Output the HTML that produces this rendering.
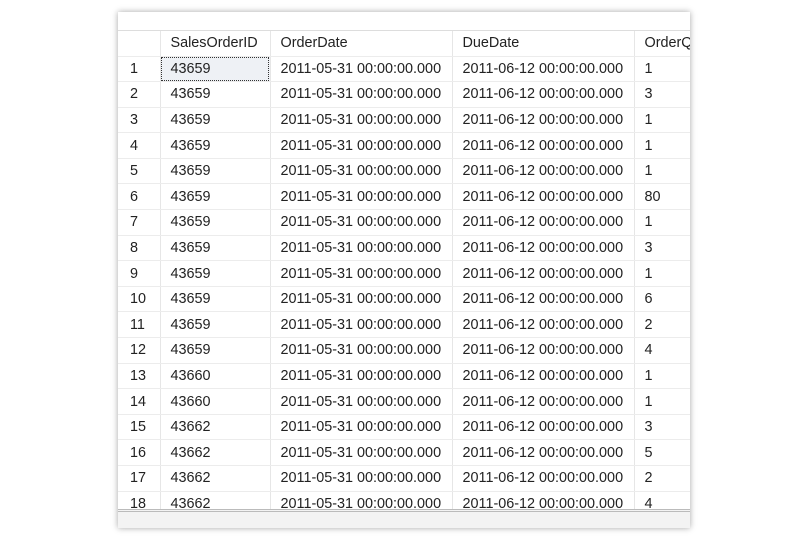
<html><head><style>
body{margin:0;background:#fff;width:800px;height:546px;overflow:hidden;font-family:"Liberation Sans",sans-serif;}
.p{position:absolute;left:118px;top:12px;width:572px;height:516px;background:#fff;box-shadow:0 0 6px rgba(0,0,0,.35);overflow:hidden}
.g{position:absolute;left:0;top:18px;width:572px;height:479px;overflow:hidden;border-top:1px solid #ddd}
table{border-collapse:collapse;font-size:14.4px;color:#222;table-layout:fixed;width:596px}
td{height:25.6px;padding:0 0 0 10px;border-right:1px solid #e6e6e6;border-bottom:1px solid #ececec;white-space:nowrap;overflow:hidden;box-sizing:border-box}
tr:first-child td{height:25px}
td:first-child{padding-left:12px}
.b{position:absolute;left:0;top:497px;width:572px;height:19px;background:#f3f3f3;border-top:3px double #bbb}
.sel{outline:1px dotted #333;outline-offset:-2px;background:#eef1f5}
</style></head><body>
<div class="p"><div class="g"><table>
<colgroup><col style="width:42px"><col style="width:110px"><col style="width:182px"><col style="width:182px"><col style="width:80px"></colgroup>
<tr><td></td><td>SalesOrderID</td><td>OrderDate</td><td>DueDate</td><td>OrderQty</td></tr>
<tr><td>1</td><td class="sel">43659</td><td>2011-05-31 00:00:00.000</td><td>2011-06-12 00:00:00.000</td><td>1</td></tr>
<tr><td>2</td><td>43659</td><td>2011-05-31 00:00:00.000</td><td>2011-06-12 00:00:00.000</td><td>3</td></tr>
<tr><td>3</td><td>43659</td><td>2011-05-31 00:00:00.000</td><td>2011-06-12 00:00:00.000</td><td>1</td></tr>
<tr><td>4</td><td>43659</td><td>2011-05-31 00:00:00.000</td><td>2011-06-12 00:00:00.000</td><td>1</td></tr>
<tr><td>5</td><td>43659</td><td>2011-05-31 00:00:00.000</td><td>2011-06-12 00:00:00.000</td><td>1</td></tr>
<tr><td>6</td><td>43659</td><td>2011-05-31 00:00:00.000</td><td>2011-06-12 00:00:00.000</td><td>80</td></tr>
<tr><td>7</td><td>43659</td><td>2011-05-31 00:00:00.000</td><td>2011-06-12 00:00:00.000</td><td>1</td></tr>
<tr><td>8</td><td>43659</td><td>2011-05-31 00:00:00.000</td><td>2011-06-12 00:00:00.000</td><td>3</td></tr>
<tr><td>9</td><td>43659</td><td>2011-05-31 00:00:00.000</td><td>2011-06-12 00:00:00.000</td><td>1</td></tr>
<tr><td>10</td><td>43659</td><td>2011-05-31 00:00:00.000</td><td>2011-06-12 00:00:00.000</td><td>6</td></tr>
<tr><td>11</td><td>43659</td><td>2011-05-31 00:00:00.000</td><td>2011-06-12 00:00:00.000</td><td>2</td></tr>
<tr><td>12</td><td>43659</td><td>2011-05-31 00:00:00.000</td><td>2011-06-12 00:00:00.000</td><td>4</td></tr>
<tr><td>13</td><td>43660</td><td>2011-05-31 00:00:00.000</td><td>2011-06-12 00:00:00.000</td><td>1</td></tr>
<tr><td>14</td><td>43660</td><td>2011-05-31 00:00:00.000</td><td>2011-06-12 00:00:00.000</td><td>1</td></tr>
<tr><td>15</td><td>43662</td><td>2011-05-31 00:00:00.000</td><td>2011-06-12 00:00:00.000</td><td>3</td></tr>
<tr><td>16</td><td>43662</td><td>2011-05-31 00:00:00.000</td><td>2011-06-12 00:00:00.000</td><td>5</td></tr>
<tr><td>17</td><td>43662</td><td>2011-05-31 00:00:00.000</td><td>2011-06-12 00:00:00.000</td><td>2</td></tr>
<tr><td>18</td><td>43662</td><td>2011-05-31 00:00:00.000</td><td>2011-06-12 00:00:00.000</td><td>4</td></tr>
</table></div><div class="b"></div></div>
</body></html>
